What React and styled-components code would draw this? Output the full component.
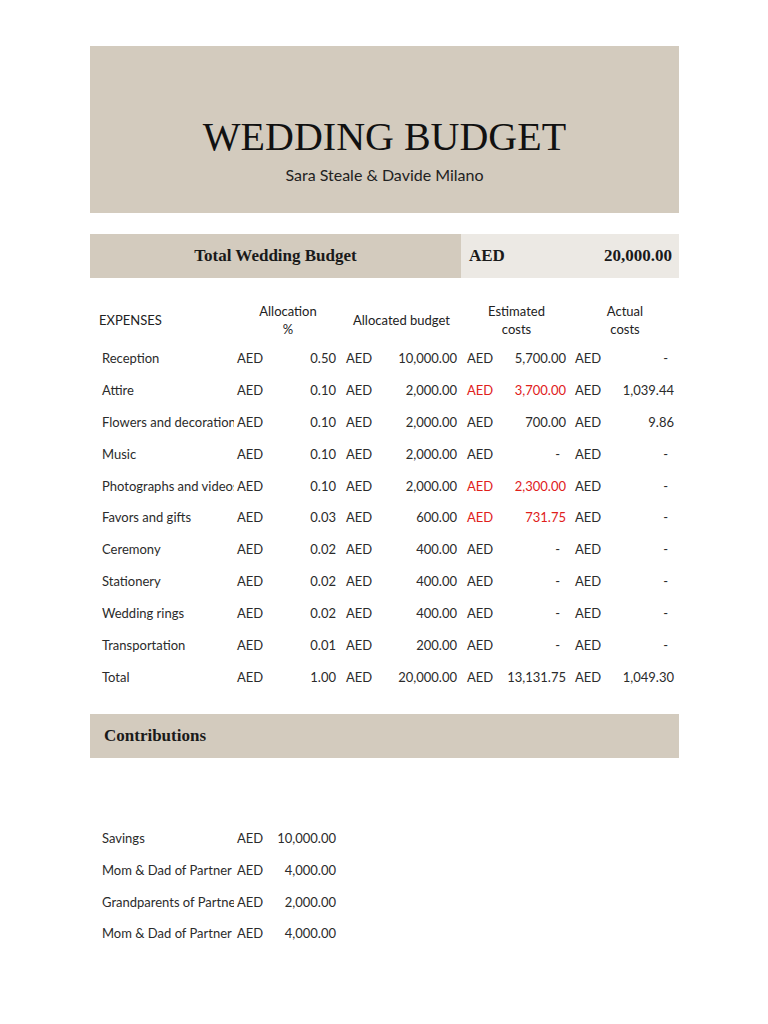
import styled, { createGlobalStyle } from "styled-components";

const GlobalStyle = createGlobalStyle`
  body {
    margin: 0;
    background: #ffffff;
    font-family: "Lato", "Noto Sans", sans-serif;
    color: #2b2b2b;
  }
`;

const Page = styled.div`
  width: 589px;
  margin-left: 90px;
  padding-top: 46px;
  padding-bottom: 40px;
`;

const Banner = styled.header`
  height: 167px;
  background: #d3cbbe;
  display: flex;
  flex-direction: column;
  align-items: center;
  padding-top: 69px;
  box-sizing: border-box;
`;

const Title = styled.h1`
  margin: 0;
  font-family: "Liberation Serif", "DejaVu Serif", serif;
  font-weight: 400;
  font-size: 40px;
  line-height: 44px;
  color: #111;
`;

const Couple = styled.p`
  margin: 6px 0 0;
  font-size: 16px;
  line-height: 20px;
  color: #222;
`;

const BudgetBar = styled.div`
  margin-top: 21px;
  height: 44px;
  display: grid;
  grid-template-columns: 371px 1fr;
  font-family: "Liberation Serif", "DejaVu Serif", serif;
  font-weight: 700;
  font-size: 17px;
  color: #1a1a1a;
`;

const BudgetLabel = styled.div`
  background: #d3cbbe;
  display: flex;
  align-items: center;
  justify-content: center;
`;

const BudgetValue = styled.div`
  background: #ece9e4;
  display: flex;
  align-items: center;
  justify-content: space-between;
  padding: 0 7px 0 8px;
`;

const Table = styled.div`
  margin-top: 20px;
  font-size: 13px;
`;

const Row = styled.div`
  display: grid;
  grid-template-columns: ${(p) => p.cols || "145px 106px 121px 109px 108px"};
  height: ${(p) => (p.head ? "44px" : "31.9px")};
  align-items: center;
`;

const HeadCell = styled.div`
  text-align: ${(p) => (p.left ? "left" : "center")};
  padding-left: ${(p) => (p.left ? "9px" : "0")};
  line-height: 18px;
  color: #222;
`;

const Name = styled.div`
  padding-left: 12px;
  margin-right: 1px;
  white-space: nowrap;
  overflow: hidden;
  color: #2b2b2b;
`;

const Money = styled.div`
  display: flex;
  justify-content: space-between;
  padding: 0 5px 0 ${(p) => p.pl || "5px"};
  color: ${(p) => (p.red ? "#e0201b" : "#2b2b2b")};
  white-space: nowrap;
`;

const Amount = styled.span`
  padding-right: ${(p) => (p.dash ? "6px" : "0")};
`;

const ContribBar = styled.div`
  margin-top: 21px;
  height: 44px;
  background: #d3cbbe;
  display: flex;
  align-items: center;
  padding-left: 14px;
  font-family: "Liberation Serif", "DejaVu Serif", serif;
  font-weight: 700;
  font-size: 17px;
  color: #1a1a1a;
`;

const ContribList = styled.div`
  margin-top: 64px;
  font-size: 13px;
`;

const expenses = [
  ["Reception", "0.50", "10,000.00", "5,700.00", "-", false],
  ["Attire", "0.10", "2,000.00", "3,700.00", "1,039.44", true],
  ["Flowers and decorations", "0.10", "2,000.00", "700.00", "9.86", false],
  ["Music", "0.10", "2,000.00", "-", "-", false],
  ["Photographs and videos", "0.10", "2,000.00", "2,300.00", "-", true],
  ["Favors and gifts", "0.03", "600.00", "731.75", "-", true],
  ["Ceremony", "0.02", "400.00", "-", "-", false],
  ["Stationery", "0.02", "400.00", "-", "-", false],
  ["Wedding rings", "0.02", "400.00", "-", "-", false],
  ["Transportation", "0.01", "200.00", "-", "-", false],
  ["Total", "1.00", "20,000.00", "13,131.75", "1,049.30", false],
];

const contributions = [
  ["Savings", "10,000.00"],
  ["Mom & Dad of Partner 1", "4,000.00"],
  ["Grandparents of Partner 1", "2,000.00"],
  ["Mom & Dad of Partner 2", "4,000.00"],
];

export default function App() {
  return (
    <>
      <GlobalStyle />
      <Page>
        <Banner>
          <Title>WEDDING BUDGET</Title>
          <Couple>Sara Steale &amp; Davide Milano</Couple>
        </Banner>

        <BudgetBar>
          <BudgetLabel>Total Wedding Budget</BudgetLabel>
          <BudgetValue>
            <span>AED</span>
            <span>20,000.00</span>
          </BudgetValue>
        </BudgetBar>

        <Table>
          <Row head>
            <HeadCell left>EXPENSES</HeadCell>
            <HeadCell>
              Allocation
              <br />%
            </HeadCell>
            <HeadCell>Allocated budget</HeadCell>
            <HeadCell>
              Estimated
              <br />
              costs
            </HeadCell>
            <HeadCell>
              Actual
              <br />
              costs
            </HeadCell>
          </Row>
          {expenses.map(([name, pct, alloc, est, actual, over]) => (
            <Row key={name}>
              <Name>{name}</Name>
              <Money pl="2px">
                <span>AED</span>
                <Amount>{pct}</Amount>
              </Money>
              <Money>
                <span>AED</span>
                <Amount>{alloc}</Amount>
              </Money>
              <Money red={over}>
                <span>AED</span>
                <Amount dash={est === "-"}>{est}</Amount>
              </Money>
              <Money pl="4px">
                <span>AED</span>
                <Amount dash={actual === "-"}>{actual}</Amount>
              </Money>
            </Row>
          ))}
        </Table>

        <ContribBar>Contributions</ContribBar>

        <ContribList>
          {contributions.map(([name, amount]) => (
            <Row key={name} cols="145px 106px">
              <Name>{name}</Name>
              <Money pl="2px">
                <span>AED</span>
                <Amount>{amount}</Amount>
              </Money>
            </Row>
          ))}
        </ContribList>
      </Page>
    </>
  );
}
